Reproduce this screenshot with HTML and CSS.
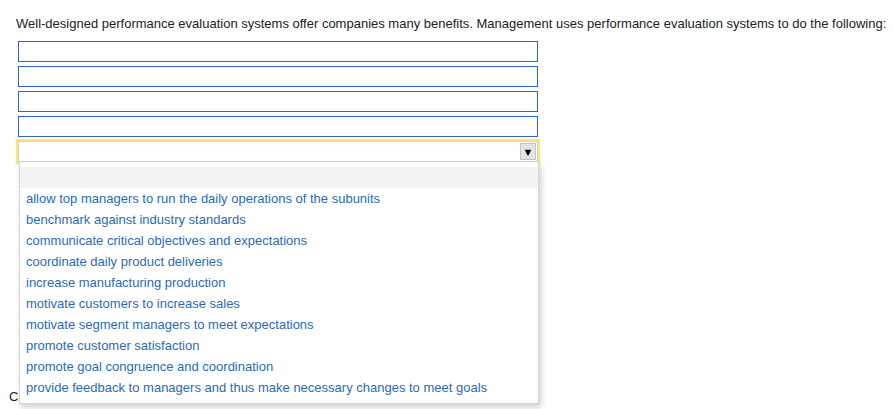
FILE: index.html
```html
<html>
<head>
    <title>Performance evaluation</title>
    <meta charset="UTF-8" name="viewport" content="width=device-width, initial-scale=1">
    <link rel="stylesheet" href="styles.css">
</head>

<body>
    <p class="pergunta">Well-designed performance evaluation systems offer companies many benefits. Management uses performance evaluation systems to do the following:</p>
    <div class="respostas">
        <input class="campo" type="text">
        <input class="campo" type="text">
        <input class="campo" type="text">
        <input class="campo" type="text">
        <div class="seletor">
            <div class="caixa">
                <span class="seta">&#9660;</span>
            </div>
            <ul class="lista">
                <li class="vazio"></li>
                <li>allow top managers to run the daily operations of the subunits</li>
                <li>benchmark against industry standards</li>
                <li>communicate critical objectives and expectations</li>
                <li>coordinate daily product deliveries</li>
                <li>increase manufacturing production</li>
                <li>motivate customers to increase sales</li>
                <li>motivate segment managers to meet expectations</li>
                <li>promote customer satisfaction</li>
                <li>promote goal congruence and coordination</li>
                <li>provide feedback to managers and thus make necessary changes to meet goals</li>
            </ul>
        </div>
    </div>
    <p class="rodape">Companies may use performance evaluation systems in several ways.</p>
</body>
</html>
```

FILE: styles.css
```css
html {
    font-family: "Liberation Sans", Arial, sans-serif;
    background-color: white;
}

body {
    margin: 0;
    width: 894px;
    height: 409px;
    overflow: hidden;
}

.pergunta {
    font-size: 13px;
    color: #222222;
    margin: 0;
    padding: 16px 0 0 16px;
    white-space: nowrap;
}

.respostas {
    display: flex;
    flex-direction: column;
    gap: 4px;
    margin: 10px 0 0 18px;
    width: 520px;
}

.campo {
    display: block;
    box-sizing: border-box;
    width: 520px;
    height: 21px;
    margin: 0;
    border: 1px solid #2f63cf;
    border-radius: 0;
    padding: 0;
    background-color: white;
}

.seletor {
    position: relative;
    height: 21px;
}

.caixa {
    box-sizing: border-box;
    width: 520px;
    height: 21px;
    border: 1px solid #d2d2d2;
    outline: 2px solid #fbe38a;
    box-shadow: 0 0 3px 2px rgba(251, 227, 138, 0.6);
    background-color: white;
    display: flex;
    justify-content: flex-end;
    align-items: stretch;
}

.seta {
    width: 14px;
    margin: 1px;
    background-color: #e4e4e4;
    border: 1px solid #c4c4c4;
    font-size: 11px;
    color: black;
    display: flex;
    align-items: center;
    justify-content: center;
}

.lista {
    position: absolute;
    top: 21px;
    left: 1px;
    width: 518px;
    margin: 0;
    padding: 5px 0 5px 0;
    list-style: none;
    background-color: white;
    border: 1px solid #d6d6d6;
    border-top: none;
    box-shadow: 2px 3px 6px rgba(0, 0, 0, 0.2);
}

.lista li {
    height: 21px;
    line-height: 21px;
    padding-left: 6px;
    font-size: 13px;
    color: #2d6ab3;
    white-space: nowrap;
}

.lista .vazio {
    background-color: #f3f3f3;
}

.rodape {
    font-size: 13px;
    color: #222222;
    margin: 0;
    padding: 227px 0 0 9px;
    white-space: nowrap;
}
```
